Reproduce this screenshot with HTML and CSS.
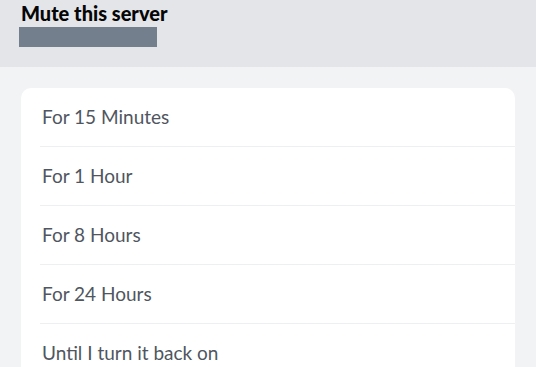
FILE: index.html
```html
<!DOCTYPE html>
<html lang="en">
<head>
    <meta charset="UTF-8">
    <meta name="viewport" content="width=device-width, initial-scale=1.0">
    <title>Mute this server</title>
    <link rel="stylesheet" href="styles.css">
</head>
<body>

<div class="header">
    <h1>Mute this server</h1>
    <div class="server-name"></div>
</div>

<div class="content">
    <ul class="options">
        <li>For 15 Minutes</li>
        <li>For 1 Hour</li>
        <li>For 8 Hours</li>
        <li>For 24 Hours</li>
        <li>Until I turn it back on</li>
    </ul>
</div>

</body>
</html>
```

FILE: styles.css
```css
body {
    margin: 0;
    font-family: Lato, "Noto Sans", sans-serif;
    background-color: #f2f3f5;
    overflow: hidden;
}
.header {
    background-color: #e3e5e8;
    height: 67px;
    padding: 0 0 0 21px;
    box-sizing: border-box;
}
h1 {
    margin: 0;
    font-size: 20px;
    font-weight: 900;
    line-height: 26px;
    color: #060607;
}
.server-name {
    width: 138px;
    height: 20px;
    margin: 1px 0 0 -2px;
    background-color: #747f8d;
}
.content {
    padding: 21px 21px 0 21px;
}
.options {
    list-style: none;
    margin: 0;
    padding: 0 0 0 19px;
    background-color: #fff;
    border-radius: 10px 10px 0 0;
}
.options li {
    height: 58px;
    line-height: 58px;
    font-size: 19px;
    color: #4f5660;
    border-bottom: 1px solid #eeeff1;
    padding-left: 2px;
}
```
